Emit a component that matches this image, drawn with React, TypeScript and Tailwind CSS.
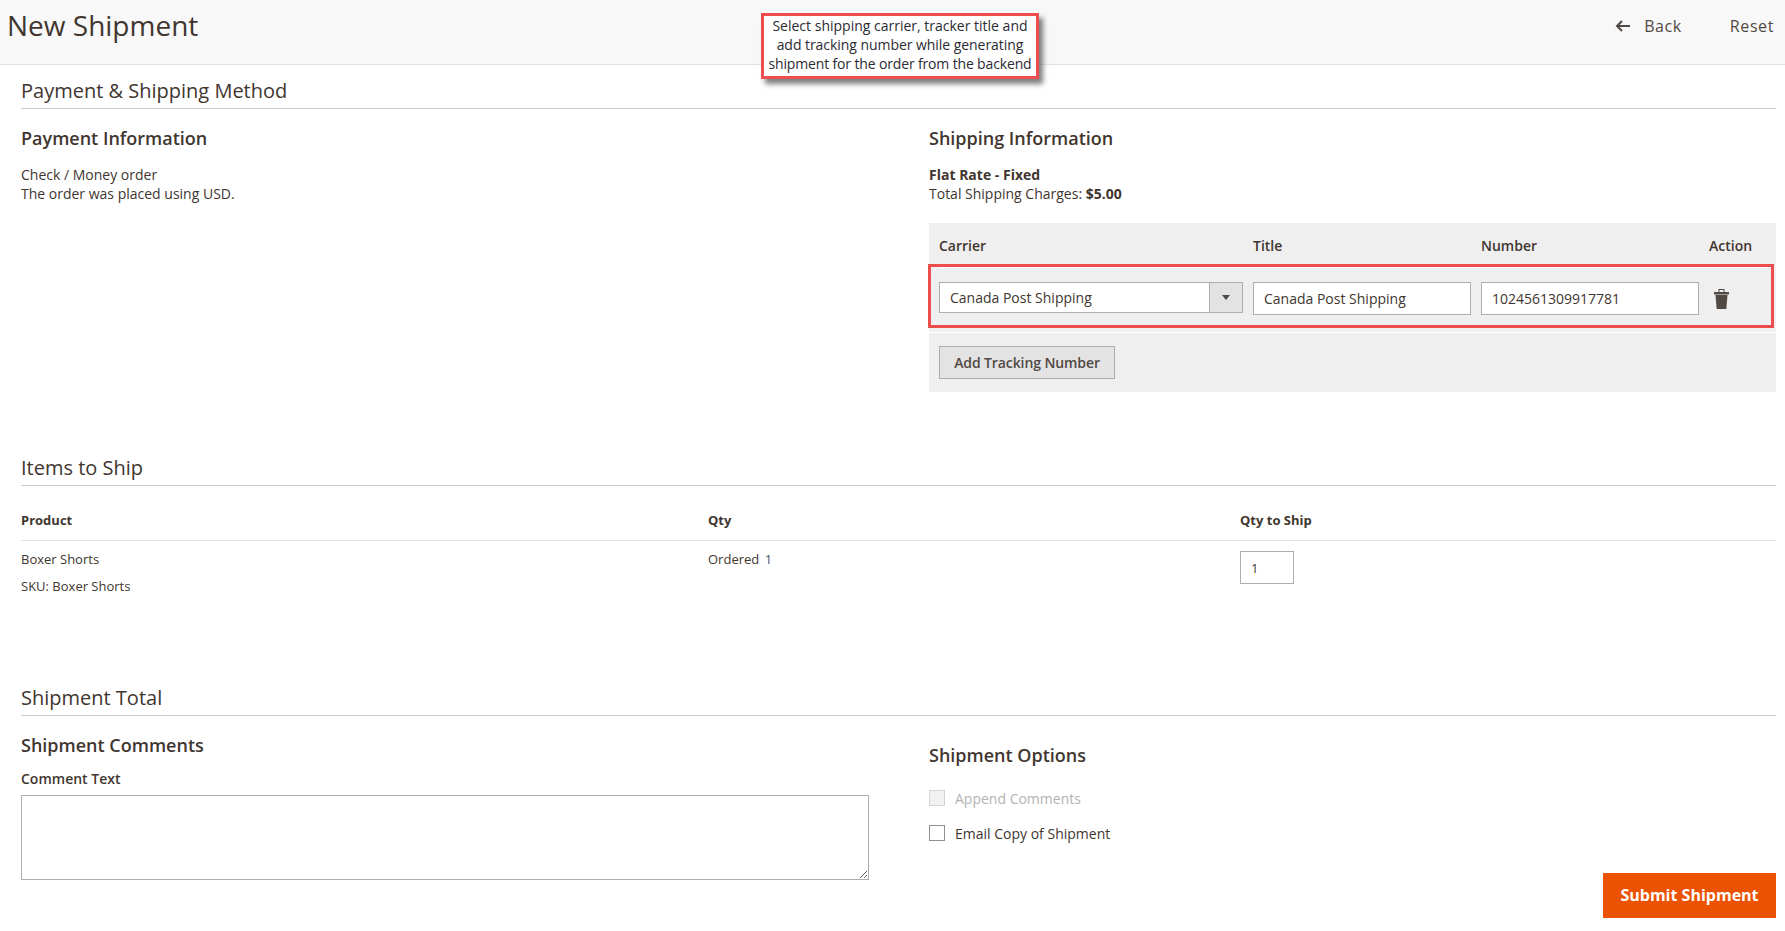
import React from "react";

const font = { fontFamily: '"Open Sans", "Noto Sans", sans-serif' };

function SectionTitle({ children }: { children: React.ReactNode }) {
  return (
    <div className="h-[32px] border-b border-[#cccccc] text-[20px] leading-[27px] font-normal text-[#41362f]">
      {children}
    </div>
  );
}

function Trash() {
  return (
    <svg width="15" height="20" viewBox="0 0 15 20" fill="#514943">
      <rect x="5" y="0.5" width="5" height="3" fill="none" stroke="#514943" />
      <rect x="0" y="3" width="15" height="2.5" />
      <path d="M1.5 6h12l-1.2 14H2.7z" />
    </svg>
  );
}

export default function App() {
  return (
    <div style={font} className="relative h-[931px] w-[1785px] overflow-hidden bg-white text-[14px] leading-[19px] text-[#41362f]">
      <header className="flex h-[65px] items-start justify-between border-b border-[#e3e3e3] bg-[#f8f8f8] pr-[11px] pl-[7px]">
        <h1 className="pt-[6px] text-[28px] leading-[38px] font-normal text-[#41362f]">New Shipment</h1>
        <div className="flex items-center gap-[48px] pt-[15px] text-[16px] leading-[22px] tracking-[0.6px] text-[#514943]">
          <span className="flex items-center gap-[14px]">
            <svg width="15" height="12" viewBox="0 0 15 12" fill="none" stroke="#514943" strokeWidth="2">
              <path d="M15 6H2M7 1 2 6l5 5" />
            </svg>
            Back
          </span>
          <span>Reset</span>
        </div>
      </header>

      <div className="absolute top-[13px] left-[761px] z-10 flex h-[66px] w-[278px] flex-col items-center justify-center border-[3px] border-[#ee4d4d] bg-white pb-[3px] text-center text-[14px] leading-[19px] text-[#2b2b33] shadow-[4px_5px_5px_rgba(0,0,0,0.5)]">
        <span>Select shipping carrier, tracker title and</span>
        <span className="tracking-[-0.05px]">add tracking number while generating</span>
        <span className="tracking-[-0.15px]">shipment for the order from the backend</span>
      </div>

      <main className="pr-[9px] pl-[21px]">
        <section className="pt-[12px]">
          <SectionTitle>Payment &amp; Shipping Method</SectionTitle>
          <div className="flex pt-[17px]">
            <div className="w-[908px]">
              <h2 className="text-[18px] leading-[24px] font-semibold">Payment Information</h2>
              <p className="mt-[15px]">Check / Money order</p>
              <p>The order was placed using USD.</p>
            </div>
            <div className="flex-1">
              <h2 className="text-[18px] leading-[24px] font-semibold">Shipping Information</h2>
              <p className="mt-[15px] font-bold">Flat Rate - Fixed</p>
              <p>
                Total Shipping Charges: <b>$5.00</b>
              </p>
              <div className="mt-[20px] h-[169px] bg-[#efefef]">
                <div className="flex h-[41px] pt-[13px] font-semibold text-[#41362f]">
                  <span className="ml-[10px] w-[314px]">Carrier</span>
                  <span className="w-[228px]">Title</span>
                  <span className="w-[228px]">Number</span>
                  <span>Action</span>
                </div>
                <div className="-ml-px flex h-[64px] w-[846px] items-start border-[3px] border-[#ee4d4d] pl-[8px]">
                  <div className="flex h-[64px] flex-1 items-start border-t border-white pt-[14px]">
                    <div className="flex h-[31px] w-[304px] items-stretch border border-[#adadad] bg-white">
                      <span className="flex-1 pl-[10px] leading-[29px]">Canada Post Shipping</span>
                      <span className="flex w-[33px] items-center justify-center border-l border-[#adadad] bg-[#e3e3e3]">
                        <span className="h-0 w-0 border-x-[4px] border-t-[5px] border-x-transparent border-t-[#514943]" />
                      </span>
                    </div>
                    <div className="ml-[10px] h-[33px] w-[218px] border border-[#adadad] bg-white pl-[10px] leading-[31px]">Canada Post Shipping</div>
                    <div className="ml-[10px] h-[33px] w-[218px] border border-[#adadad] bg-white pl-[10px] leading-[31px]">1024561309917781</div>
                    <span className="mt-[7px] ml-[15px] flex"><Trash /></span>
                  </div>
                </div>
                <div className="mt-[4px] h-px bg-white" />
                <button className="mt-[13px] ml-[10px] h-[33px] w-[176px] border border-[#adadad] bg-[#e3e3e3] text-center text-[14px] font-semibold tracking-[-0.1px] text-[#514943]">
                  Add Tracking Number
                </button>
              </div>
            </div>
          </div>
        </section>

        <section className="pt-[62px]">
          <SectionTitle>Items to Ship</SectionTitle>
          <div className="flex h-[55px] items-end border-b border-[#e3e3e3] pb-[10px] text-[13px] font-bold">
            <span className="w-[687px]">Product</span>
            <span className="w-[532px]">Qty</span>
            <span>Qty to Ship</span>
          </div>
          <div className="flex pt-[9px] text-[13px] leading-[18px]">
            <div className="w-[687px]">
              <p>Boxer Shorts</p>
              <p className="mt-[9px]">SKU: Boxer Shorts</p>
            </div>
            <div className="w-[532px]">Ordered <span className="ml-[2px] text-[#41566b]">1</span></div>
            <div className="mt-px flex h-[33px] w-[54px] items-center border border-[#adadad] pl-[10px] text-[#41362f]">1</div>
          </div>
        </section>

        <section className="pt-[89px]">
          <SectionTitle>Shipment Total</SectionTitle>
          <div className="flex pt-[17px]">
            <div className="w-[908px]">
              <h2 className="text-[18px] leading-[24px] font-semibold">Shipment Comments</h2>
              <p className="mt-[12px] font-semibold">Comment Text</p>
              <textarea className="mt-[7px] block h-[85px] w-[848px] border border-[#adadad] bg-white outline-none" />
            </div>
            <div className="flex-1 pt-[10px]">
              <h2 className="text-[18px] leading-[24px] font-semibold">Shipment Options</h2>
              <div className="mt-[23px] flex h-[16px] items-center gap-[10px] text-[#b3b3b3]">
                <span className="size-[16px] border border-[#d4d4d4] bg-[#f1f1f1]" />
                Append Comments
              </div>
              <div className="mt-[19px] flex h-[16px] items-center gap-[10px]">
                <span className="size-[16px] border border-[#8f8f8f] bg-white" />
                Email Copy of Shipment
              </div>
              <div className="mt-[32px] flex justify-end">
                <button className="h-[45px] w-[173px] bg-[#eb5202] text-[16px] font-bold text-white">Submit Shipment</button>
              </div>
            </div>
          </div>
        </section>
      </main>
    </div>
  );
}
